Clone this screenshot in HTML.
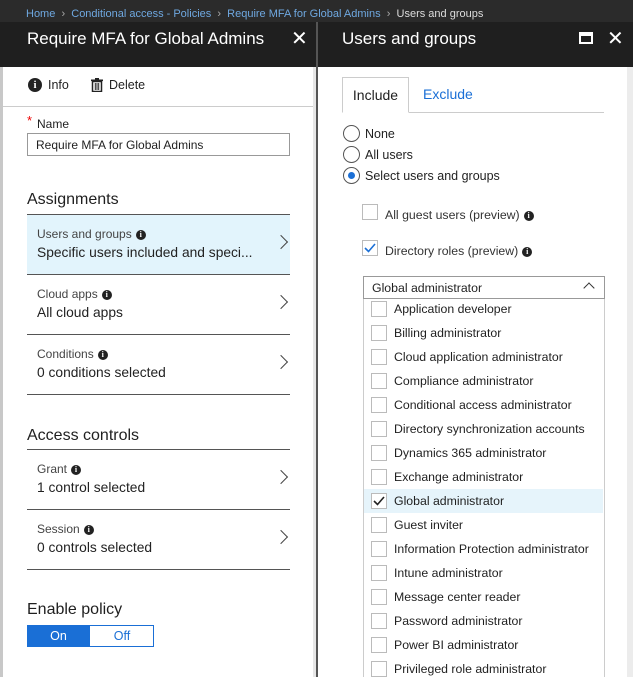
<!DOCTYPE html>
<html><head><meta charset="utf-8"><style>
*{box-sizing:border-box;margin:0;padding:0}
body{width:633px;height:677px;overflow:hidden;background:#fff;font-family:"Liberation Sans",sans-serif;color:#1f1f1f;position:relative}
.a{position:absolute;white-space:nowrap}
.info{display:inline-block;width:10px;height:10px;border-radius:50%;background:#222;color:#fff;font-size:8px;line-height:10px;text-align:center;font-weight:bold;vertical-align:1px;margin-left:4px;font-family:"Liberation Serif",serif}
.chev{position:absolute;right:4px;top:22px;width:10px;height:10px;border-right:1.3px solid #444;border-top:1.3px solid #444;transform:rotate(45deg)}
.item{position:absolute;left:27px;width:263px;height:60px;border-top:1px solid #555}
.item .t{position:absolute;left:10px;top:12px;font-size:12px;color:#444}
.item .v{position:absolute;left:10px;top:30px;font-size:13.8px;color:#222}
.cb{position:absolute;width:16px;height:16px;border:1px solid #bbb;background:#fff}
.row{position:absolute;left:364px;width:239px;height:24px;font-size:12.3px}
.row .cb{left:7px;top:4px}
.row span{position:absolute;left:30px;top:5px}
.radio{position:absolute;left:343px;width:17px;height:17px;border-radius:50%;border:1px solid #555;background:#fff}
</style></head><body>
<div class="a" style="left:0;top:0;width:633px;height:22px;background:#2b2b2b"></div>
<div class="a" style="left:26px;top:8px;font-size:11px;color:#6fa8e0">Home <span style="color:#aaa">&nbsp;›&nbsp;</span> Conditional access - Policies <span style="color:#aaa">&nbsp;›&nbsp;</span> Require MFA for Global Admins <span style="color:#aaa">&nbsp;›&nbsp;</span> <span style="color:#ddd">Users and groups</span></div>
<div class="a" style="left:0;top:22px;width:633px;height:45px;background:#1f1f1f"></div>
<div class="a" style="left:316px;top:22px;width:2px;height:655px;background:#555"></div>
<div class="a" style="left:27px;top:29px;font-size:17px;color:#fff">Require MFA for Global Admins</div>
<div class="a" style="left:291px;top:26px;font-size:20px;color:#fff">✕</div>
<div class="a" style="left:342px;top:29px;font-size:17px;color:#fff">Users and groups</div>
<div class="a" style="left:579px;top:32px;width:14px;height:12px;border:2px solid #fff;border-top-width:4px"></div>
<div class="a" style="left:607px;top:26px;font-size:20px;color:#fff">✕</div>
<!-- left panel -->
<div class="a" style="left:0;top:67px;width:3px;height:610px;background:#c8c8c8"></div>
<div class="a" style="left:313px;top:67px;width:3px;height:610px;background:#e6e6e6"></div>
<div class="a" style="left:3px;top:106px;width:310px;height:1px;background:#ccc"></div>
<div class="a" style="left:28px;top:78px;width:14px;height:14px;border-radius:50%;background:#222;color:#fff;font-size:11px;text-align:center;line-height:14px;font-weight:bold;font-family:'Liberation Serif',serif">i</div>
<div class="a" style="left:48px;top:78px;font-size:12.5px">Info</div>
<svg class="a" style="left:91px;top:78px" width="12" height="14"><rect x="0" y="1.5" width="12" height="1.6" fill="#222"/><rect x="4" y="0" width="4" height="2" fill="#222"/><path d="M1.5 3.5h9v10h-9z" fill="none" stroke="#222" stroke-width="1.5"/><path d="M4.3 5v7M6 5v7M7.7 5v7" stroke="#222" stroke-width="1"/></svg>
<div class="a" style="left:109px;top:78px;font-size:12.5px">Delete</div>
<div class="a" style="left:27px;top:113px;font-size:13px;color:#e00">*</div>
<div class="a" style="left:37px;top:117px;font-size:12px">Name</div>
<div class="a" style="left:27px;top:133px;width:263px;height:23px;border:1px solid #999;font-size:12px;padding:4px 8px">Require MFA for Global Admins</div>
<div class="a" style="left:27px;top:191px;font-size:16px">Assignments</div>
<div class="item" style="top:214px;background:#e2f4fc"><div class="t">Users and groups<span class="info">i</span></div><div class="v">Specific users included and speci...</div><div class="chev"></div></div>
<div class="item" style="top:274px"><div class="t">Cloud apps<span class="info">i</span></div><div class="v">All cloud apps</div><div class="chev"></div></div>
<div class="item" style="top:334px"><div class="t">Conditions<span class="info">i</span></div><div class="v">0 conditions selected</div><div class="chev"></div></div>
<div class="a" style="left:27px;top:394px;width:263px;height:1px;background:#555"></div>
<div class="a" style="left:27px;top:427px;font-size:16px">Access controls</div>
<div class="item" style="top:449px"><div class="t">Grant<span class="info">i</span></div><div class="v">1 control selected</div><div class="chev"></div></div>
<div class="item" style="top:509px"><div class="t">Session<span class="info">i</span></div><div class="v">0 controls selected</div><div class="chev"></div></div>
<div class="a" style="left:27px;top:569px;width:263px;height:1px;background:#555"></div>
<div class="a" style="left:27px;top:601px;font-size:16px">Enable policy</div>
<div class="a" style="left:27px;top:625px;width:127px;height:22px;border:1px solid #1a6fd6"></div>
<div class="a" style="left:27px;top:625px;width:63px;height:22px;background:#1a6fd6;color:#fff;font-size:12.5px;text-align:center;line-height:22px">On</div>
<div class="a" style="left:90px;top:625px;width:64px;height:22px;color:#1a6fd6;font-size:12.5px;text-align:center;line-height:22px">Off</div>
<!-- right panel -->
<div class="a" style="left:627px;top:67px;width:6px;height:610px;background:#ececec"></div>
<div class="a" style="left:342px;top:112px;width:262px;height:1px;background:#ccc"></div>
<div class="a" style="left:342px;top:77px;width:67px;height:36px;border:1px solid #ccc;border-bottom:1px solid #fff;background:#fff;font-size:14px;text-align:center;line-height:34px">Include</div>
<div class="a" style="left:423px;top:86px;font-size:14px;color:#1a6fd6">Exclude</div>
<div class="radio" style="top:125px"></div><div class="a" style="left:365px;top:127px;font-size:12.5px">None</div>
<div class="radio" style="top:146px"></div><div class="a" style="left:365px;top:148px;font-size:12.5px">All users</div>
<div class="radio" style="top:167px"><div style="position:absolute;left:4px;top:4px;width:7px;height:7px;border-radius:50%;background:#1a6fd6"></div></div><div class="a" style="left:365px;top:169px;font-size:12.5px">Select users and groups</div>
<div class="cb" style="left:362px;top:204px"></div><div class="a" style="left:385px;top:208px;font-size:12.3px;color:#333">All guest users (preview)<span class="info">i</span></div>
<div class="cb" style="left:362px;top:240px"><svg width="14" height="14" style="position:absolute;left:0;top:0"><path d="M2 7 L5.5 10.5 L12 3" stroke="#1a6fd6" stroke-width="1.6" fill="none"/></svg></div><div class="a" style="left:385px;top:244px;font-size:12.3px;color:#333">Directory roles (preview)<span class="info">i</span></div>
<div class="a" style="left:363px;top:276px;width:242px;height:23px;border:1px solid #999;font-size:12.3px;padding:4px 8px">Global administrator</div>
<div class="a" style="left:585px;top:284px;width:8px;height:8px;border-left:1.3px solid #333;border-top:1.3px solid #333;transform:rotate(45deg)"></div>
<div class="a" style="left:363px;top:299px;width:242px;height:378px;border-left:1px solid #ccc;border-right:1px solid #ccc"></div>
<div class="row" style="top:297px"><div class="cb"></div><span>Application developer</span></div>
<div class="row" style="top:321px"><div class="cb"></div><span>Billing administrator</span></div>
<div class="row" style="top:345px"><div class="cb"></div><span>Cloud application administrator</span></div>
<div class="row" style="top:369px"><div class="cb"></div><span>Compliance administrator</span></div>
<div class="row" style="top:393px"><div class="cb"></div><span>Conditional access administrator</span></div>
<div class="row" style="top:417px"><div class="cb"></div><span>Directory synchronization accounts</span></div>
<div class="row" style="top:441px"><div class="cb"></div><span>Dynamics 365 administrator</span></div>
<div class="row" style="top:465px"><div class="cb"></div><span>Exchange administrator</span></div>
<div class="row" style="top:489px;background:#e6f4fb"><div class="cb"><svg width="14" height="14" style="position:absolute;left:0;top:0"><path d="M2 7 L5.5 10.5 L12 3" stroke="#222" stroke-width="1.6" fill="none"/></svg></div><span>Global administrator</span></div>
<div class="row" style="top:513px"><div class="cb"></div><span>Guest inviter</span></div>
<div class="row" style="top:537px"><div class="cb"></div><span>Information Protection administrator</span></div>
<div class="row" style="top:561px"><div class="cb"></div><span>Intune administrator</span></div>
<div class="row" style="top:585px"><div class="cb"></div><span>Message center reader</span></div>
<div class="row" style="top:609px"><div class="cb"></div><span>Password administrator</span></div>
<div class="row" style="top:633px"><div class="cb"></div><span>Power BI administrator</span></div>
<div class="row" style="top:657px"><div class="cb"></div><span>Privileged role administrator</span></div>
</body></html>
